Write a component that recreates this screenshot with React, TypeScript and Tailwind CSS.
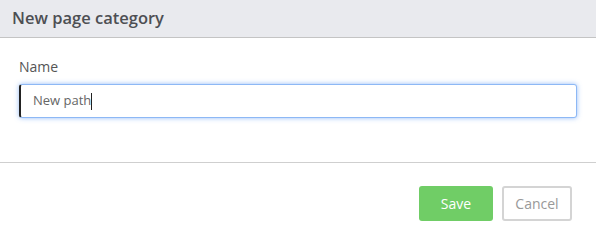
export default function App() {
  return (
    <div className="w-[596px] h-[246px] bg-white font-['Open_Sans',sans-serif]">
      <div className="h-[38px] bg-[#e9eaee] border-b border-[#c4c4c4] flex items-center px-[12px]">
        <h1 className="text-[16.5px] font-semibold text-[#4d4f53]">New page category</h1>
      </div>
      <div className="px-[19px] pt-[20px] pb-[44px] border-b border-[#cfcfcf]">
        <label className="block text-[14px] text-[#555] leading-[18px] mb-[8px]">Name</label>
        <div className="h-[34px] rounded-[3px] border border-[#8db8f5] border-l-2 border-l-[#222] shadow-[0_0_5px_rgba(102,160,245,0.7)] flex items-center px-[12px]">
          <span className="text-[13px] text-[#666]">New path</span>
          <span className="w-px h-[17px] bg-[#222]" />
        </div>
      </div>
      <div className="flex justify-end gap-[9px] pt-[23px] pr-[24px]">
        <button className="w-[74px] h-[35px] rounded-[3px] bg-[#70cd66] text-white text-[14px]">Save</button>
        <button className="w-[70px] h-[35px] rounded-[3px] border-2 border-[#d4d4d4] bg-white text-[#999] text-[14px]">Cancel</button>
      </div>
    </div>
  );
}
